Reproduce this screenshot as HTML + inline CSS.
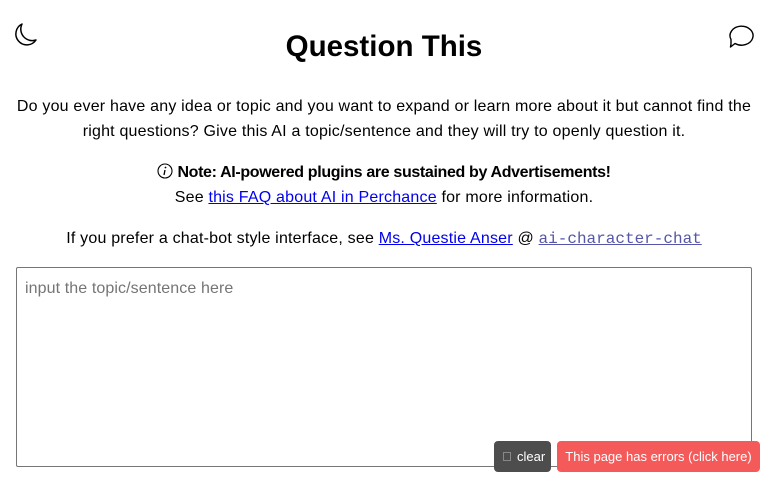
<!DOCTYPE html>
<html><head><meta charset="utf-8"><style>
html,body{margin:0;padding:0;background:#fff;width:768px;height:480px;overflow:hidden}
body{font-family:"Liberation Sans",sans-serif;color:#000;font-size:16px;position:relative}
h1{position:absolute;left:0;right:0;top:29px;margin:0;text-align:center;font-size:29.5px;font-weight:bold;line-height:36px}
.p{position:absolute;left:-20px;right:-20px;text-align:center;line-height:25px;letter-spacing:0.2px}
a{color:#00e}
.mono{font-family:"Liberation Mono",monospace;font-size:16px;color:#55a;letter-spacing:0}
.ta{position:absolute;left:16px;top:267px;width:734px;height:198px;border:1px solid #767676;border-radius:2px}
.ta span{position:absolute;left:8px;top:12px;color:#757575;font-size:16px;letter-spacing:0.1px}
.btn{position:absolute;top:441px;height:31px;line-height:31px;border-radius:4px;color:#fff;font-size:13px;font-family:"Liberation Sans",sans-serif}
</style></head><body>
<svg style="position:absolute;left:10px;top:21px" width="30" height="28" viewBox="0 0 30 28"><path d="M12 3 A11 11 0 1 0 26 19 A11.5 11.5 0 0 1 12 3 Z" fill="none" stroke="#000" stroke-width="1.5" stroke-linejoin="round"/></svg>
<svg style="position:absolute;left:726px;top:23px" width="28" height="26" viewBox="0 0 28 26"><path d="M5 21 L4.5 24 L9 20.5 A11.5 9.5 0 1 0 5 16.5 Z" fill="none" stroke="#000" stroke-width="1.4" stroke-linejoin="round"/></svg>
<h1>Question This</h1>
<div class="p" style="top:94px">Do you ever have any idea or topic and you want to expand or learn more about it but cannot find the<br>right questions? Give this AI a topic/sentence and they will try to openly question it.</div>
<div class="p" style="top:160px"><b style="letter-spacing:-0.35px"><svg width="16" height="16" viewBox="0 0 16 16" style="vertical-align:-2px"><circle cx="8" cy="8" r="7" fill="none" stroke="#000" stroke-width="1.1"/><circle cx="8.5" cy="4.5" r="0.9"/><path d="M8 7 L7 12" stroke="#000" stroke-width="1.3"/></svg> Note: AI-powered plugins are sustained by Advertisements!</b><br>See <a href="#">this FAQ about AI in Perchance</a> for more information.</div>
<div class="p" style="top:226px">If you prefer a chat-bot style interface, see <a href="#">Ms. Questie Anser</a> @ <a href="#" class="mono">ai-character-chat</a></div>
<div class="ta"><span>input the topic/sentence here</span></div>
<div class="btn" style="left:494px;width:57px;background:#4d4d4d"><span style="display:inline-block;width:6px;height:7px;border:1px solid #888;margin:0 6px 0 9px"></span>clear</div>
<div class="btn" style="left:557px;width:203px;background:#f55a5a;text-align:center">This page has errors (click here)</div>
</body></html>
